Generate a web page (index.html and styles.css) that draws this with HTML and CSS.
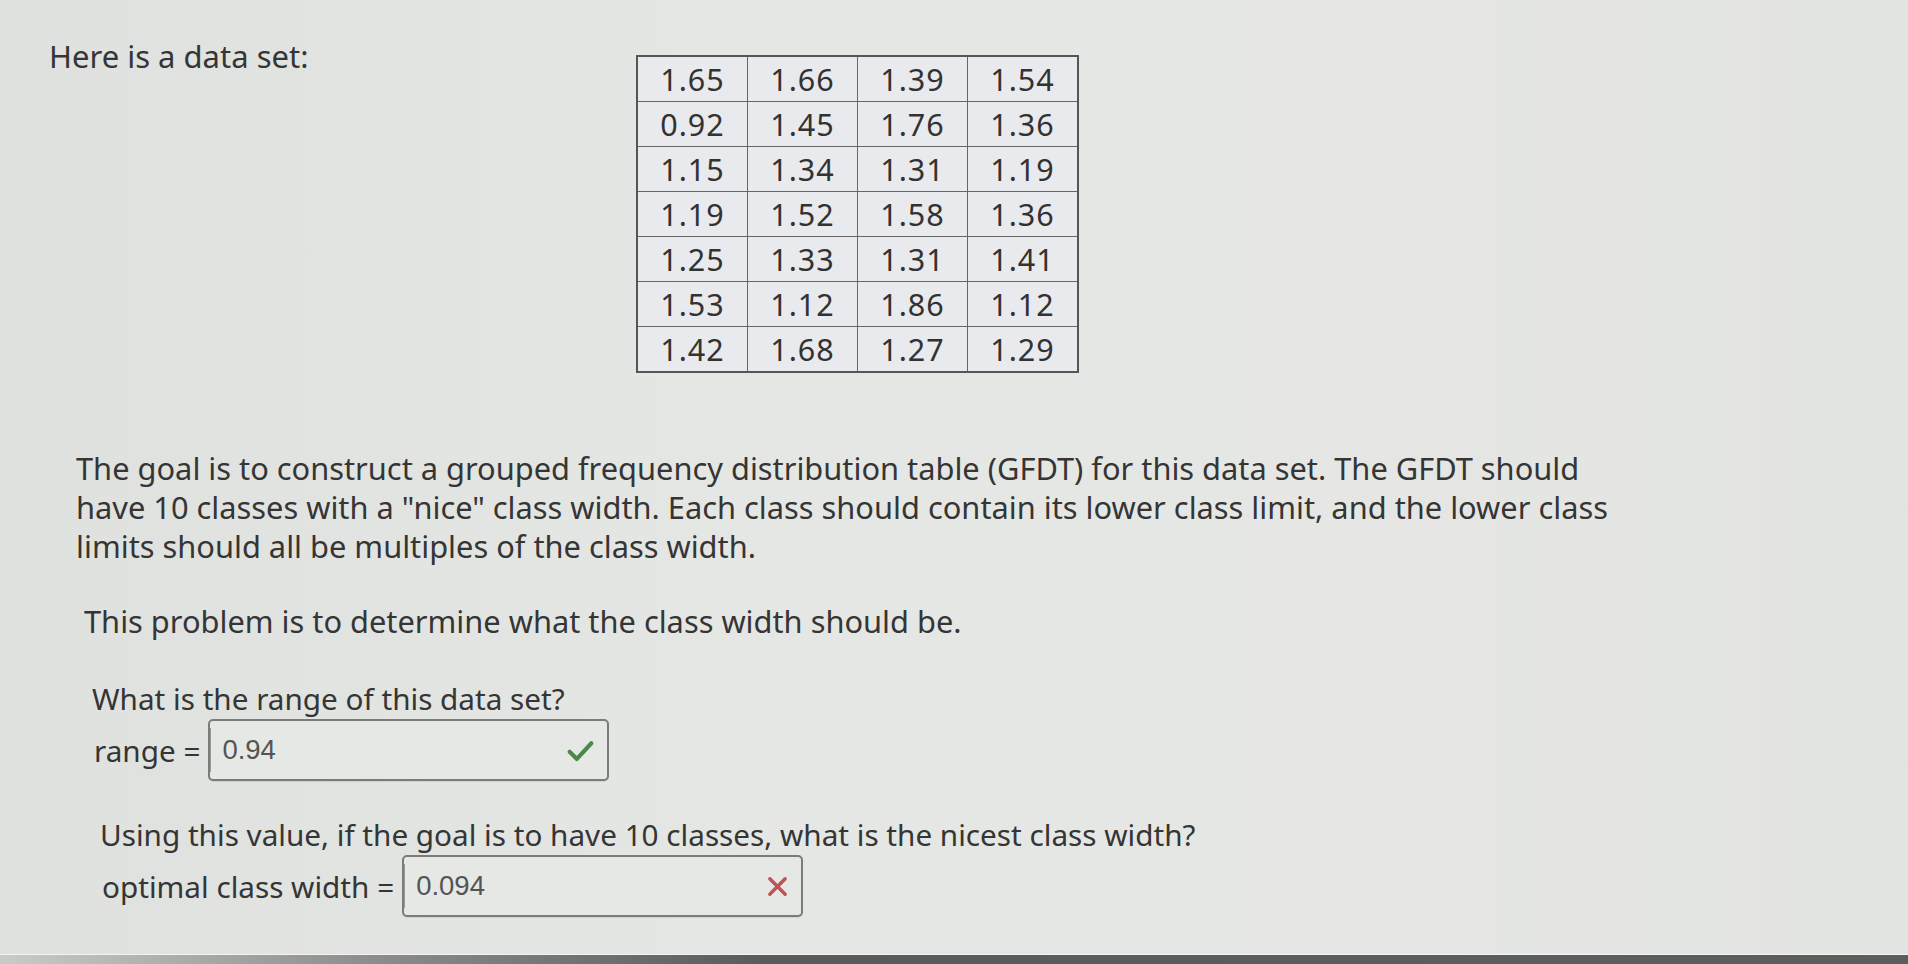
FILE: index.html
```html
<!DOCTYPE html>
<html lang="en">
<head>
<meta charset="utf-8">
<title>Class width problem</title>
<link rel="stylesheet" href="styles.css">
</head>
<body>
<div class="page">
  <main class="content">
    <section class="dataset">
      <div class="dataset-label">Here is a data set:</div>
      <table class="data-table">
        <tr><td>1.65</td><td>1.66</td><td>1.39</td><td>1.54</td></tr>
        <tr><td>0.92</td><td>1.45</td><td>1.76</td><td>1.36</td></tr>
        <tr><td>1.15</td><td>1.34</td><td>1.31</td><td>1.19</td></tr>
        <tr><td>1.19</td><td>1.52</td><td>1.58</td><td>1.36</td></tr>
        <tr><td>1.25</td><td>1.33</td><td>1.31</td><td>1.41</td></tr>
        <tr><td>1.53</td><td>1.12</td><td>1.86</td><td>1.12</td></tr>
        <tr><td>1.42</td><td>1.68</td><td>1.27</td><td>1.29</td></tr>
      </table>
    </section>

    <p class="goal">The goal is to construct a grouped frequency distribution table (GFDT) for this data set. The GFDT should have 10 classes with a "nice" class width. Each class should contain its lower class limit, and the lower class limits should all be multiples of the class width.</p>

    <p class="problem">This problem is to determine what the class width should be.</p>

    <section class="question q-range">
      <div class="q-text">What is the range of this data set?</div>
      <div class="answer-row">
        <span class="answer-label">range =</span>
        <div class="answer-box">
          <span class="answer-value">0.94</span>
          <svg class="mark check" viewBox="0 0 24 24" width="29" height="29"><path d="M3 13 L9 19 L21 6" fill="none" stroke="#4c8849" stroke-width="3.4" stroke-linecap="round" stroke-linejoin="round"/></svg>
        </div>
      </div>
    </section>

    <section class="question q-width">
      <div class="q-text">Using this value, if the goal is to have 10 classes, what is the nicest class width?</div>
      <div class="answer-row">
        <span class="answer-label">optimal class width =</span>
        <div class="answer-box">
          <span class="answer-value">0.094</span>
          <svg class="mark cross" viewBox="0 0 24 24" width="23" height="23"><path d="M4 4 L20 20 M20 4 L4 20" fill="none" stroke="#c05454" stroke-width="3.6" stroke-linecap="round"/></svg>
        </div>
      </div>
    </section>
  </main>
  <div class="bezel"></div>
</div>
</body>
</html>
```

FILE: styles.css
```css
html, body {
  margin: 0;
  padding: 0;
}

body {
  background: #e2e4e1;
  color: #353535;
  font-family: "Noto Sans", "Open Sans", "DejaVu Sans", sans-serif;
}

.page {
  height: 964px;
  display: flex;
  flex-direction: column;
  overflow: hidden;
  background: linear-gradient(90deg, #dfe1de 0%, #e5e7e4 40%, #e6e7e4 70%, #e2e4e1 100%);
}

.content {
  flex: 1;
}

.dataset {
  display: flex;
  align-items: flex-start;
  padding: 38px 0 0 49px;
}

.dataset-label {
  font-size: 31px;
  line-height: 36px;
  width: 587px;
  flex: none;
}

.data-table {
  margin-top: 17px;
  border-collapse: collapse;
  border: 2px solid #555;
  background: #e9eaed;
}

.data-table td {
  width: 109px;
  height: 44px;
  padding: 0;
  border: 1.5px solid #666;
  text-align: center;
  font-size: 30.5px;
  letter-spacing: 1px;
  color: #323232;
  line-height: 44px;
}

.goal {
  margin: 76px 0 0 76px;
  width: 1560px;
  font-size: 30.8px;
  line-height: 39px;
}

.problem {
  margin: 36px 0 0 84px;
  font-size: 30.8px;
  line-height: 39px;
}

.question {
  margin-left: 92px;
}

.q-range {
  margin-top: 40px;
}

.q-width {
  margin-top: 36px;
  margin-left: 100px;
}

.q-text {
  font-size: 29.7px;
  line-height: 36px;
}

.answer-row {
  display: flex;
  align-items: center;
  margin-top: 2px;
}

.answer-label {
  font-size: 29.7px;
  margin-right: 8px;
  padding-left: 2px;
}

.answer-box {
  display: flex;
  align-items: center;
  justify-content: space-between;
  width: 401px;
  height: 62px;
  box-sizing: border-box;
  border: 2px solid #7a7c79;
  border-radius: 5px;
  background: #e6e8e5;
  padding: 0 12px 0 10px;
  box-shadow: 0 1px 0 rgba(0, 0, 0, 0.08);
}

.answer-value {
  border-left: 1.5px solid #9a9a9a;
  padding-left: 11px;
  margin-left: -10px;
  height: 44px;
  line-height: 44px;
  font-family: "Liberation Sans", Arial, sans-serif;
  font-size: 27.5px;
  color: #545454;
}

.mark {
  flex: none;
}

.bezel {
  height: 9px;
  background: linear-gradient(90deg, #c9cbc8 0%, #8a8b8a 20%, #5a5b5c 40%, #5c5d5f 100%);
  border-top: 1px solid #f4f4f4;
}
```
